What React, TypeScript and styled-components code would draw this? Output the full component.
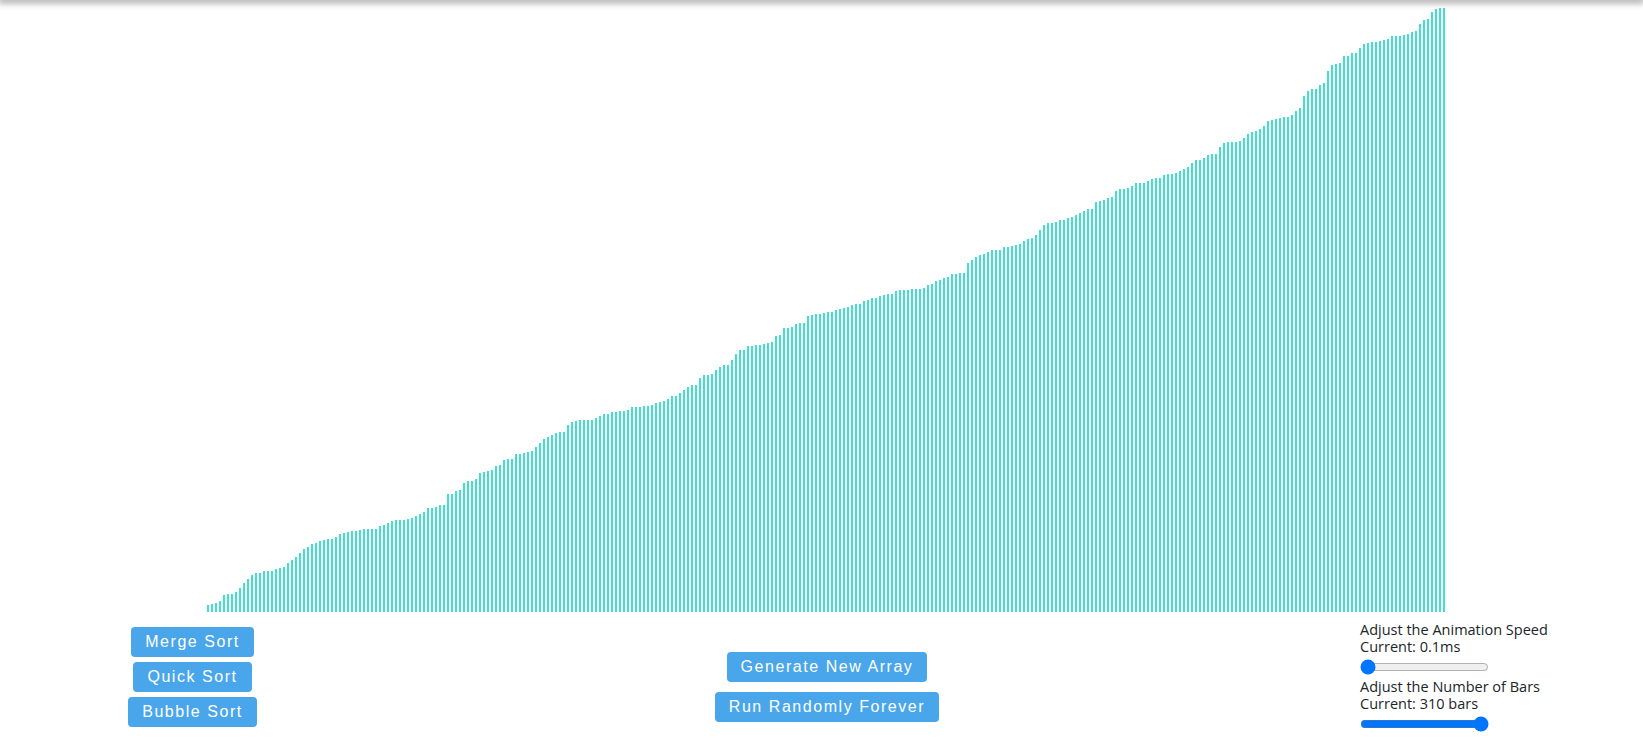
import React, { useState } from 'react';
import styled, { createGlobalStyle } from 'styled-components';

const barHeights: number[] = [
  6, 7, 8, 10, 16, 17, 17, 19, 23, 28, 32, 36, 38, 38, 40, 40, 40, 42, 43, 44, 48, 51, 54, 58, 62, 64, 67, 68, 70, 71,
  72, 72, 74, 77, 78, 79, 80, 80, 81, 82, 82, 82, 82, 85, 86, 88, 90, 91, 91, 91, 92,
  93, 95, 97, 99, 103, 103, 104, 106, 106, 117, 117, 120, 121, 128, 130, 130, 132, 138, 139, 140, 141, 145, 146, 151,
  152, 152, 157, 157, 158, 159, 160, 164, 168, 172, 174, 176, 178, 179, 179, 186, 189, 190, 191, 191, 191, 191, 193,
  195, 197, 197, 199, 199,
  200, 200, 201, 204, 204, 204, 205, 205, 206, 208, 209, 210, 212, 215, 215, 218, 221, 224, 226, 226, 233, 236, 236,
  237, 241, 244, 246, 246, 251, 257, 261, 261, 265, 265, 266, 266, 267, 268, 269, 275, 276, 283, 283, 284, 287, 288,
  288, 295, 296, 297, 297, 298,
  299, 299, 301, 302, 303, 304, 306, 307, 307, 310, 311, 313, 313, 315, 316, 317, 317, 320, 321, 321, 321, 322, 322,
  322, 323, 326, 327, 330, 331, 333, 334, 337, 337, 338, 338, 348, 351, 354, 356, 357, 359, 361, 361, 361, 364, 364,
  365, 366, 367, 370, 372, 373,
  376, 381, 386, 388, 388, 389, 391, 391, 393, 394, 396, 398, 400, 402, 402, 409, 410, 411, 413, 414, 420, 422, 422,
  423, 425, 428, 428, 428, 430, 432, 433, 433, 436, 437, 437, 438, 440, 442, 444, 448, 451, 451, 453, 456, 457, 457,
  464, 468, 469, 469, 469, 470,
  473, 477, 479, 480, 482, 485, 490, 491, 492, 493, 494, 494, 496, 500, 503, 515, 520, 522, 522, 526, 528, 540, 546,
  547, 548, 555, 555, 558, 558, 563, 567, 568, 569, 569, 570, 571, 572, 575, 575, 575, 576, 577, 579, 580, 587, 591,
  592, 599, 602, 603, 603,
];

const GlobalStyle = createGlobalStyle`
  html, body {
    margin: 0;
    padding: 0;
    background: #fff;
    overflow: hidden;
  }
`;

const TopShade = styled.div`
  height: 0;
  box-shadow: 0 0 7px 2px rgba(0, 0, 0, 0.55);
`;

const Chart = styled.div`
  display: flex;
  align-items: flex-end;
  height: 612px;
  padding-left: 206px;
`;

const Bar = styled.div<{ $height: number }>`
  width: 2px;
  height: ${(p) => p.$height + 1}px;
  margin: 0 1px;
  background-color: turquoise;
`;

const Controls = styled.div`
  display: grid;
  grid-template-columns: 385px 884px 1fr;
`;

const ButtonColumn = styled.div<{ $top: number; $gap: number }>`
  display: flex;
  flex-direction: column;
  align-items: center;
  gap: ${(p) => p.$gap}px;
  padding-top: ${(p) => p.$top}px;
`;

const ActionButton = styled.button`
  height: 30px;
  padding: 0 14px;
  border: none;
  border-radius: 4px;
  background-color: #4aa6eb;
  color: #fff;
  font-family: 'Liberation Sans', Arial, sans-serif;
  font-size: 16px;
  letter-spacing: 1.55px;
  cursor: pointer;
`;

const SliderColumn = styled.div`
  padding: 10px 0 0 91px;
  color: #212529;
  font-family: 'Open Sans', sans-serif;
  font-size: 14.5px;
  line-height: 16.5px;
`;

const SliderLabel = styled.div`
  white-space: nowrap;
`;

const Slider = styled.input`
  display: block;
  width: 129px;
  height: 16px;
  margin: 4px 0 4px;
`;

export default function App() {
  const [speed, setSpeed] = useState(1);
  const [bars, setBars] = useState(310);

  return (
    <>
      <GlobalStyle />
      <TopShade />
      <Chart>
        {barHeights.slice(0, bars).map((h, i) => (
          <Bar key={i} $height={h} />
        ))}
      </Chart>
      <Controls>
        <ButtonColumn $top={15} $gap={5}>
          <ActionButton>Merge Sort</ActionButton>
          <ActionButton>Quick Sort</ActionButton>
          <ActionButton>Bubble Sort</ActionButton>
        </ButtonColumn>
        <ButtonColumn $top={40} $gap={10}>
          <ActionButton>Generate New Array</ActionButton>
          <ActionButton>Run Randomly Forever</ActionButton>
        </ButtonColumn>
        <SliderColumn>
          <SliderLabel>Adjust the Animation Speed</SliderLabel>
          <SliderLabel>Current: {speed / 10}ms</SliderLabel>
          <Slider type="range" min={1} max={100} value={speed} onChange={(e) => setSpeed(Number(e.target.value))} />
          <SliderLabel>Adjust the Number of Bars</SliderLabel>
          <SliderLabel>Current: {bars} bars</SliderLabel>
          <Slider type="range" min={10} max={310} value={bars} onChange={(e) => setBars(Number(e.target.value))} />
        </SliderColumn>
      </Controls>
    </>
  );
}
